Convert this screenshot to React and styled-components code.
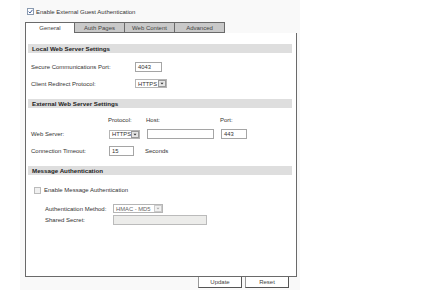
import React from 'react'
import styled, { createGlobalStyle } from 'styled-components'

const GlobalStyle = createGlobalStyle`
    body {
        margin: 0;
        background: #fff;
        font-family: Tahoma, "Liberation Sans", Arial, sans-serif;
        color: #333;
    }
`

const Page = styled.div`
    padding-left: 20px;
    width: 440px;
    height: 303px;
    box-sizing: border-box;
`

const Frame = styled.div`
    width: 280px;
    height: 290px;
    box-sizing: border-box;
    background: #f9f9f9;
    padding: 7px 0 0 5px;
`

const TopCheckRow = styled.label`
    display: flex;
    align-items: center;
    height: 9px;
    padding-left: 2px;
    font-size: 6px;
    gap: 2px;
`

const Box = styled.span`
    width: 7px;
    height: 7px;
    box-sizing: border-box;
    border: 1px solid ${p => p.$disabled ? '#bbb' : '#8a9ab0'};
    background: ${p => p.$disabled ? '#f0f0f0' : '#fff'};
    display: flex;
    align-items: center;
    justify-content: center;
`

const TabBar = styled.div`
    display: flex;
    margin-top: 6px;
    height: 11px;
`

const Tab = styled.div`
    width: 50px;
    height: 11px;
    box-sizing: border-box;
    border: 1px solid #6a6a6a;
    border-bottom: ${p => p.$active ? 'none' : '1px solid #6a6a6a'};
    border-left: ${p => p.$first ? '1px solid #6a6a6a' : 'none'};
    background: ${p => p.$active ? '#fff' : '#c9c9c9'};
    font-size: 6px;
    display: flex;
    align-items: center;
    justify-content: center;
    color: #444;
`

const Panel = styled.div`
    width: 272px;
    height: 244px;
    box-sizing: border-box;
    border: 1px solid #6a6a6a;
    border-top: none;
    background: #fff;
    padding: 11px 4px 0 2px;
`

const Bar = styled.div`
    height: 9px;
    background: #dedede;
    font-size: 6.2px;
    font-weight: bold;
    display: flex;
    align-items: center;
    padding-left: 4px;
    margin-top: ${p => p.$top || 0}px;
    color: #222;
`

const Row = styled.div`
    display: flex;
    align-items: center;
    height: ${p => p.$h || 10}px;
    margin-top: ${p => p.$top || 0}px;
    padding-left: ${p => p.$indent || 3}px;
    font-size: 6px;
`

const Label = styled.span`
    width: ${p => p.$w}px;
    flex-shrink: 0;
`

const Cell = styled.span`
    width: ${p => p.$w}px;
    flex-shrink: 0;
`

const TextBox = styled.div`
    width: ${p => p.$w}px;
    height: ${p => p.$h || 10}px;
    box-sizing: border-box;
    border: 1px solid ${p => p.$disabled ? '#bbb' : '#a5a5a5'};
    background: ${p => p.$disabled ? '#ececea' : '#fff'};
    font-size: 5.8px;
    display: flex;
    align-items: center;
    padding-left: 2px;
    margin-right: ${p => p.$gap || 0}px;
    flex-shrink: 0;
`

const Select = styled.div`
    width: ${p => p.$w}px;
    height: 9px;
    box-sizing: border-box;
    border: 1px solid #b5b5b5;
    background: #fff;
    display: flex;
    align-items: center;
    justify-content: space-between;
    font-size: 5.8px;
    padding-left: 2px;
    margin-right: ${p => p.$gap || 0}px;
    color: ${p => p.$disabled ? '#666' : '#333'};
    flex-shrink: 0;
`

const Arrow = styled.span`
    width: 8px;
    height: 7px;
    box-sizing: border-box;
    border: 1px solid ${p => p.$disabled ? '#ccc' : '#999'};
    background: ${p => p.$disabled ? '#f2f2f2' : '#e6e6e6'};
    display: flex;
    align-items: center;
    justify-content: center;
`

const Footer = styled.div`
    display: flex;
    gap: 3px;
    width: 272px;
    justify-content: flex-end;
    padding-right: 8px;
    box-sizing: border-box;
`

const Button = styled.div`
    width: 44px;
    height: 11px;
    box-sizing: border-box;
    border: 1px solid #999;
    border-right-color: #555;
    border-bottom-color: #555;
    border-top: none;
    background: #fff;
    font-size: 6px;
    display: flex;
    align-items: center;
    justify-content: center;
    color: #444;
`

const Check = () => (
    <svg width="5" height="5" viewBox="0 0 5 5">
        <path d="M0.6 2.6 L2 4 L4.5 0.8" fill="none" stroke="#2a4a8a" strokeWidth="0.9" />
    </svg>
)

const SelectBox = ({ value, w, gap, disabled }) => (
    <Select $w={w} $gap={gap} $disabled={disabled}>
        {value}
        <Arrow $disabled={disabled}>
            <svg width="4" height="3" viewBox="0 0 4 3">
                <path d="M0.5 0.8 L3.5 0.8 L2 2.4 Z" fill={disabled ? '#aaa' : '#333'} />
            </svg>
        </Arrow>
    </Select>
)

const App = () => {
    const tabs = ['General', 'Auth Pages', 'Web Content', 'Advanced']

    return (
        <Page>
            <GlobalStyle />
            <Frame>
                <TopCheckRow>
                    <Box><Check /></Box>
                    Enable External Guest Authentication
                </TopCheckRow>
                <TabBar>
                    {tabs.map((t, i) => (
                        <Tab key={t} $active={i === 0} $first={i === 0}>{t}</Tab>
                    ))}
                </TabBar>
                <Panel>
                    <Bar>Local Web Server Settings</Bar>
                    <Row $top={9}>
                        <Label $w={104}>Secure Communications Port:</Label>
                        <TextBox $w={27}>4043</TextBox>
                    </Row>
                    <Row $top={7} $h={9}>
                        <Label $w={104}>Client Redirect Protocol:</Label>
                        <SelectBox value="HTTPS" w={32} />
                    </Row>

                    <Bar $top={11}>External Web Server Settings</Bar>
                    <Row $top={8} $h={8}>
                        <Label $w={77} />
                        <Cell $w={38}>Protocol:</Cell>
                        <Cell $w={74}>Host:</Cell>
                        <Cell $w={30}>Port:</Cell>
                    </Row>
                    <Row $top={5}>
                        <Label $w={78}>Web Server:</Label>
                        <SelectBox value="HTTPS" w={31} gap={7} />
                        <TextBox $w={67} $gap={7} />
                        <TextBox $w={26}>443</TextBox>
                    </Row>
                    <Row $top={7}>
                        <Label $w={78}>Connection Timeout:</Label>
                        <TextBox $w={25} $gap={11}>15</TextBox>
                        Seconds
                    </Row>

                    <Bar $top={10}>Message Authentication</Bar>
                    <Row $top={11} $h={8} $indent={6}>
                        <Box $disabled />
                        <span style={{ marginLeft: 3 }}>Enable Message Authentication</span>
                    </Row>
                    <Row $top={10} $h={9} $indent={17}>
                        <Label $w={68}>Authentication Method:</Label>
                        <SelectBox value="HMAC - MD5" w={50} disabled />
                    </Row>
                    <Row $top={2} $indent={17}>
                        <Label $w={68}>Shared Secret:</Label>
                        <TextBox $w={94} $disabled />
                    </Row>
                </Panel>
                <Footer>
                    <Button>Update</Button>
                    <Button>Reset</Button>
                </Footer>
            </Frame>
        </Page>
    )
}

export default App
